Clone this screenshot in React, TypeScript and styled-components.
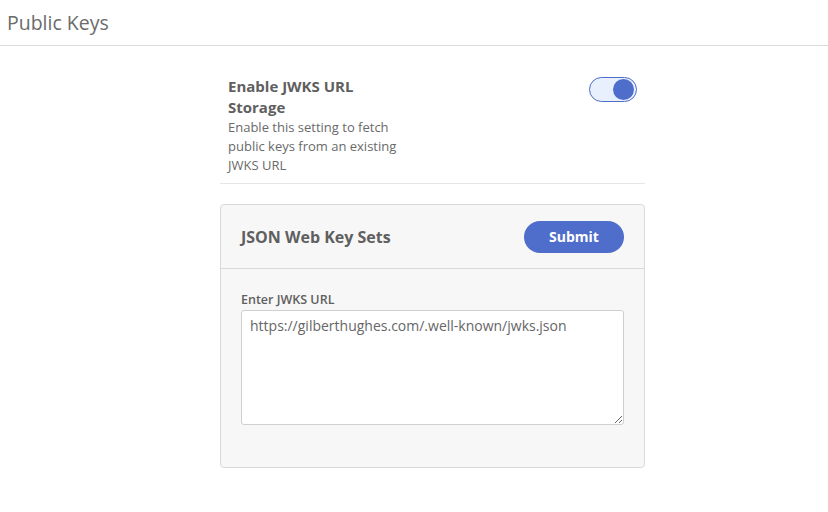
import * as React from 'react';
import styled, { createGlobalStyle } from 'styled-components';

const GlobalStyle = createGlobalStyle`
    body {
        margin: 0;
        background: #fff;
        font-family: "Open Sans", "Liberation Sans", sans-serif;
        color: #5f5f5f;
    }
`;

const Header = styled.div`
    height: 45px;
    border-bottom: 1px solid #dcdcdc;
    display: flex;
    align-items: center;
    padding-left: 7px;
    font-size: 19.5px;
    color: #6b6b6b;
`;

const Content = styled.div`
    width: 425px;
    margin-left: 220px;
    padding-top: 30px;
`;

const SettingRow = styled.div`
    display: flex;
    justify-content: space-between;
    padding: 0 8px 8px 8px;
    border-bottom: 1px solid #e6e6e6;
`;

const SettingText = styled.div`
    width: 185px;
`;

const SettingTitle = styled.div`
    font-size: 15px;
    font-weight: 700;
    line-height: 21px;
    color: #5f5f5f;
`;

const SettingDesc = styled.div`
    font-size: 13px;
    line-height: 19px;
    color: #6a6a6a;
`;

const Toggle = styled.div<{ on: boolean }>`
    width: 42px;
    height: 23px;
    margin-top: 1px;
    border: 1px solid #4f6dcb;
    border-radius: 13px;
    background: #e8f0fd;
    display: flex;
    align-items: center;
    justify-content: ${p => (p.on ? 'flex-end' : 'flex-start')};
    padding: 0 2px;
    box-sizing: content-box;
`;

const Knob = styled.div`
    width: 21px;
    height: 21px;
    border-radius: 50%;
    background: #4f6dcb;
`;

const Card = styled.div`
    margin-top: 20px;
    background: #f7f7f7;
    border: 1px solid #dadada;
    border-radius: 4px;
`;

const CardHeader = styled.div`
    height: 63px;
    display: flex;
    align-items: center;
    justify-content: space-between;
    padding: 0 20px;
    border-bottom: 1px solid #dadada;
`;

const CardTitle = styled.div`
    font-size: 16px;
    font-weight: 700;
    color: #5f5f5f;
`;

const SubmitButton = styled.button`
    width: 100px;
    height: 32px;
    border: none;
    border-radius: 16px;
    background: #4f6dcb;
    color: #fff;
    font-family: inherit;
    font-size: 14px;
    font-weight: 700;
`;

const CardBody = styled.div`
    padding: 23px 20px 42px 20px;
`;

const Label = styled.label`
    display: block;
    font-size: 12.5px;
    font-weight: 600;
    line-height: 16px;
    color: #5f5f5f;
    margin-bottom: 2px;
`;

const UrlInput = styled.textarea`
    display: block;
    width: 100%;
    height: 115px;
    box-sizing: border-box;
    border: 1px solid #cfcfcf;
    border-radius: 3px;
    background: #fff;
    padding: 5px 8px;
    font-family: inherit;
    font-size: 14px;
    line-height: 20px;
    color: #666;
    resize: vertical;
    outline: none;
`;

export default function App() {
    const [enabled, setEnabled] = React.useState(true);
    const [url, setUrl] = React.useState('https://gilberthughes.com/.well-known/jwks.json');

    return (
        <>
            <GlobalStyle />
            <Header>Public Keys</Header>
            <Content>
                <SettingRow>
                    <SettingText>
                        <SettingTitle>Enable JWKS URL Storage</SettingTitle>
                        <SettingDesc>Enable this setting to fetch public keys from an existing JWKS URL</SettingDesc>
                    </SettingText>
                    <Toggle on={enabled} onClick={() => setEnabled(!enabled)}>
                        <Knob />
                    </Toggle>
                </SettingRow>
                <Card>
                    <CardHeader>
                        <CardTitle>JSON Web Key Sets</CardTitle>
                        <SubmitButton>Submit</SubmitButton>
                    </CardHeader>
                    <CardBody>
                        <Label>Enter JWKS URL</Label>
                        <UrlInput value={url} onChange={e => setUrl(e.target.value)} />
                    </CardBody>
                </Card>
            </Content>
        </>
    );
}
